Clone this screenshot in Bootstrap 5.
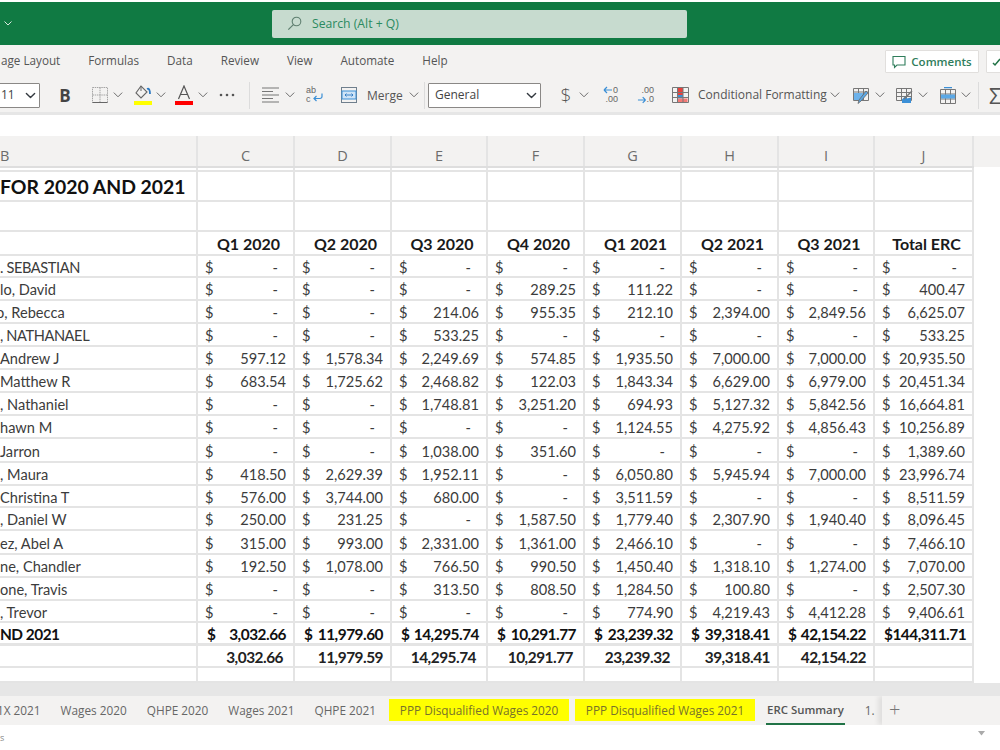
<!DOCTYPE html>
<html lang="en">
<head>
<meta charset="utf-8">
<title>ERC Summary</title>
<link href="https://cdn.jsdelivr.net/npm/bootstrap@5.3.0/dist/css/bootstrap.min.css" rel="stylesheet">
<style>
html,body{height:750px;overflow:hidden;background:#fff;}
body{font-family:"Open Sans","Liberation Sans",sans-serif;color:#444;padding-top:2px;width:1000px;}
.titlebar{height:43px;background:#107a43;color:#fff;position:relative;}
.title-chev{margin-left:4px;}
.searchbox{width:415px;height:28px;margin-left:260px;background:#c7dbcf;border-radius:2px;color:#2a8a60;font-size:12.2px;padding-left:15px;gap:10px;}
.searchbox span{padding-top:1px;}
.ribbon{height:70px;background:#f3f2f1;border-bottom:3px solid #e6e6e6;overflow:hidden;font-size:12px;color:#555;}
.menu{height:32px;}
.menu .nav-link{padding:0;color:#555;font-size:11.7px;margin-right:28px;}
.menu .nav-item:first-child{margin-left:1px;}
.comments{height:23px;width:94px;padding:0;background:#fff;border:1px solid #e1dfdd;border-radius:1px;color:#2f7d5b;font-size:11.5px;font-weight:600;margin-top:5px;flex:none;gap:5px;}
.share{height:23px;width:30px;padding:0 0 0 5px;background:#fff;border:1px solid #e1dfdd;border-radius:1px;margin:5px -16px 0 7px;flex:none;}
.tools{height:36px;margin-left:-10px;}
.tools>*{flex:none;}
.tools .form-select{height:25px;padding:0 0 0 6px;font-size:12px;color:#444;border:1px solid #8a8886;border-radius:1px;background-position:right 3px center;background-size:11px 11px;}
.sel-size{width:50px;padding-left:10px!important;}
.sel-fmt{width:113px;}
.bold-b{width:16px;text-align:center;font-weight:700;font-size:17px;color:#444;line-height:1;}
.vr-line{width:1px;height:27px;background:#dcdcdc;}
.dollar{width:12px;font-size:19px;line-height:1;color:#555;text-align:center;font-weight:300;}
.sigma{font-size:22px;line-height:1;color:#555;}
.t-merge{width:36px;white-space:nowrap;padding-top:2px;}
.t-cf{width:127px;white-space:nowrap;font-size:12px;}
.chev{width:10px;height:6px;margin-right:-2px;}
.stack{font-family:"Liberation Sans",sans-serif;font-size:9px;line-height:9.500px;color:#666;white-space:nowrap;}
.stack>div{display:flex;align-items:center;}
.w-dec{width:16px;}
.w-inc{width:17px;}
.w-wrap{width:17px;}
.w-wrap>div:last-child svg{margin-left:2px;margin-top:-5px;}
.end{justify-content:flex-end;}
.m3{margin-left:3px}.m4{margin-left:4px}.m5{margin-left:5px}.m6{margin-left:6px}.m7{margin-left:7px}.m9{margin-left:9px}.m10{margin-left:10px}.m11{margin-left:11px}.m12{margin-left:12px}.m13{margin-left:13px}.m14{margin-left:14px}.m15{margin-left:15px}.m17{margin-left:17px}.m18{margin-left:18px}.m19{margin-left:19px}
.gap-white{height:21px;}
.sheet-wrap{height:547px;position:relative;overflow:hidden;background:linear-gradient(#f3f2f1 0,#f3f2f1 31px,#fff 31px);}
.sheet{table-layout:fixed;width:973px;font-family:Lato,"Liberation Sans",sans-serif;font-size:14.6px;color:#3c3c3c;border-collapse:collapse;}
.sheet th,.sheet td{padding:4px 7px 0 7px;border:0;border-right:2px solid #e4e4e4;border-bottom:2px solid #e4e4e4;background:transparent;box-shadow:none;text-align:right;vertical-align:middle;white-space:nowrap;overflow:hidden;height:23px;line-height:1;color:#3c3c3c;}
.sheet td i{float:left;font-style:normal;}
.sheet .z{padding-right:15px;}
.sheet td.name{text-align:left;padding-left:0;padding-right:0;}
.sheet td.caps{letter-spacing:-.4px;}
.sheet td.out{text-indent:-4px;}
.sheet thead th{height:31px;font-family:"Open Sans",sans-serif;font-weight:400;font-size:14.5px;color:#6c6c6c;text-align:center;padding:10px 0 0;border-bottom-color:#dedede;}
.sheet thead th:first-child{text-align:left;}
.sheet .r-clip td{height:4px;padding:0;}
.sheet .r-30 td{height:30px;}
.sheet .r-title td{font-size:19.4px;font-weight:700;color:#111;padding-top:2px;}
.sheet .r-head td{height:24px;font-size:16px;font-weight:700;color:#1a1a1a;text-align:center;padding:2px 0 0 6px;}
.sheet .r-22 td{height:22px;}
.sheet .r-24 td{height:24px;}
.sheet .r-total td{height:22px;font-size:15.4px;letter-spacing:-.5px;font-weight:700;color:#111;border-bottom-width:3px;padding-left:9px;}
.sheet .r-total td.name{padding-left:0;}
.sheet .r-check td{font-size:15.4px;letter-spacing:-.5px;font-weight:700;color:#222;}
.sheet .r-check .p10{padding-right:10px;}
.sheet .r-last td{height:15px;}
.scroll-strip{height:13px;background:#e6e6e6;}
.tabbar{height:29px;background:#f3f2f1;font-size:11.8px;color:#666;position:relative;overflow:hidden;}
.tabbar .nav-link{padding:0;color:#666;font-size:11.8px;white-space:nowrap;}
.tabbar .nav-item{margin-right:20px;}
.tabbar .nav-item.first{margin-left:-3px;}
.tabbar .nav-item.ppp{background:#ff0;height:22px;width:180px;margin:0 6px 0 0;text-align:center;}
.tabbar .nav-item.ppp .nav-link{line-height:22px;color:#77722a;}
.tabbar .nav-item.ppp.ppp-first{margin-left:-7px;}
.tabbar .nav-item.act{margin-left:5px;}
.tabbar .nav-link.active{font-weight:600;color:#555;background:none;border-bottom:2px solid #217346;padding:0 1px;height:26px;line-height:22px;font-size:11.4px;}
.tabs-row{height:29px;padding-top:3px;}
.tabs-row .plainlink{line-height:22px;}
.plus-cell{position:absolute;right:0;top:0;width:118px;height:29px;background:#f3f2f1;box-shadow:-4px 0 5px rgba(0,0,0,.08);color:#777;font-size:20px;line-height:27px;padding-left:7px;font-weight:300;}
.tail{height:25px;color:#888;font-size:9px;padding:6px 15px 0 0;}
</style>
</head>
<body>
<div class="titlebar d-flex align-items-center">
  <svg class="title-chev" width="8" height="5" viewBox="0 0 8 5"><path d="M.5.5 4 4 7.500.5" fill="none" stroke="#d9e8df" stroke-width="1"/></svg>
  <div class="searchbox d-flex align-items-center">
    <svg width="15" height="15" viewBox="0 0 15 15"><circle cx="9.500" cy="5.500" r="4.300" fill="none" stroke="#5f7f70" stroke-width="1.100"/><path d="M6.400 8.600 1.300 13.700" stroke="#5f7f70" stroke-width="1.200"/></svg>
    <span>Search (Alt + Q)</span>
  </div>
</div>

<div class="ribbon">
  <div class="menu d-flex">
    <ul class="nav align-items-center">
      <li class="nav-item"><a class="nav-link" href="#">age Layout</a></li>
      <li class="nav-item"><a class="nav-link" href="#">Formulas</a></li>
      <li class="nav-item"><a class="nav-link" href="#">Data</a></li>
      <li class="nav-item"><a class="nav-link" href="#">Review</a></li>
      <li class="nav-item"><a class="nav-link" href="#">View</a></li>
      <li class="nav-item"><a class="nav-link" href="#">Automate</a></li>
      <li class="nav-item"><a class="nav-link" href="#">Help</a></li>
    </ul>
    <button class="btn comments ms-auto d-flex align-items-center justify-content-center">
      <svg width="14" height="14" viewBox="0 0 14 14"><path d="M1 1.500h12v8.500H5L2.500 12.500V10H1z" fill="none" stroke="#2f7d5b" stroke-width="1.100"/></svg>
      <span>Comments</span>
    </button>
    <button class="btn share d-flex align-items-center">
      <svg width="10" height="10" viewBox="0 0 10 10"><path d="M1 6l2 2 5-6" fill="none" stroke="#217346" stroke-width="1.500"/></svg>
    </button>
  </div>
  <div class="tools d-flex align-items-center">
    <select class="form-select sel-size"><option>11</option></select>
    <span class="bold-b m17">B</span>
    <svg class="m19" width="16" height="16" viewBox="0 0 16 16"><path d="M.5.5h15v15H.5zM8 .5v15M.5 8h15" fill="none" stroke="#a5a5a5" stroke-width="1" stroke-dasharray="1.500 .7"/><path d="M.5 15.500h15" stroke="#666" stroke-width="1"/></svg>
    <svg class="chev m5" viewBox="0 0 8 5"><path d="M.5.5 4 4 7.500.5" fill="none" stroke="#666" stroke-width=".8"/></svg>
    <svg class="m13" width="18" height="20" viewBox="0 0 18 20"><path d="M7 1 2 8l5 5 6-6z" fill="none" stroke="#666" stroke-width="1.100"/><path d="M7 1v5" stroke="#666"/><path d="M13 4c2-1 3 1 3 5" fill="none" stroke="#2b79c2" stroke-width="1.800"/><rect y="16" width="18" height="4" fill="#ff0"/></svg>
    <svg class="chev m4" viewBox="0 0 8 5"><path d="M.5.5 4 4 7.500.5" fill="none" stroke="#666" stroke-width=".8"/></svg>
    <svg class="m11" width="18" height="20" viewBox="0 0 18 20"><path d="M3.500 14 9 1l5.500 13M5.500 9.500h7" fill="none" stroke="#555" stroke-width="1.200"/><rect y="16" width="18" height="4" fill="#f00"/></svg>
    <svg class="chev m5" viewBox="0 0 8 5"><path d="M.5.5 4 4 7.500.5" fill="none" stroke="#666" stroke-width=".8"/></svg>
    <svg class="m13" width="16" height="4" viewBox="0 0 16 4"><circle cx="2" cy="2" r="1.300" fill="#555"/><circle cx="8" cy="2" r="1.300" fill="#555"/><circle cx="14" cy="2" r="1.300" fill="#555"/></svg>
    <span class="vr-line m14"></span>
    <svg class="m12" width="17" height="16" viewBox="0 0 17 16"><path d="M0 1h17M0 4.500h11M0 8h17M0 11.500h11M0 15h17" stroke="#777" stroke-width="1.100"/></svg>
    <svg class="chev m6" viewBox="0 0 8 5"><path d="M.5.5 4 4 7.500.5" fill="none" stroke="#666" stroke-width=".8"/></svg>
    <div class="stack w-wrap m13">
      <div>ab</div>
      <div>c<svg width="10" height="9" viewBox="0 0 10 9"><path d="M9 .5v3a2 2 0 0 1-2 2H1M3.500 3 1 5.500 3.500 8" fill="none" stroke="#3b8fd6" stroke-width="1.200"/></svg></div>
    </div>
    <svg class="m18" width="16" height="16" viewBox="0 0 16 16"><rect x=".5" y=".5" width="15" height="15" fill="none" stroke="#6f7f8d"/><rect x="1" y="4" width="14" height="8" fill="#cfe4f6" stroke="#3b8fd6"/><path d="M4 8h8M4 8l1.500-1.500M4 8l1.500 1.500M12 8l-1.500-1.500M12 8l-1.500 1.500" fill="none" stroke="#2b79c2" stroke-width=".9"/></svg>
    <span class="t-merge m10">Merge</span>
    <svg class="chev m6" viewBox="0 0 8 5"><path d="M.5.5 4 4 7.500.5" fill="none" stroke="#666" stroke-width=".8"/></svg>
    <span class="vr-line m7"></span>
    <select class="form-select sel-fmt m3"><option>General</option></select>
    <span class="dollar m19">$</span>
    <svg class="chev m7" viewBox="0 0 8 5"><path d="M.5.5 4 4 7.500.5" fill="none" stroke="#666" stroke-width=".8"/></svg>
    <div class="stack w-dec m15">
      <div class="end"><svg width="10" height="8" viewBox="0 0 10 8"><path d="M9 4H1M1 4l3-3M1 4l3 3" fill="none" stroke="#3b8fd6" stroke-width="1.200"/></svg>0</div>
      <div class="end">.00</div>
    </div>
    <div class="stack w-inc m19">
      <div class="end">.00</div>
      <div class="end"><svg width="10" height="8" viewBox="0 0 10 8"><path d="M1 4h8M9 4 6 1M9 4 6 7" fill="none" stroke="#3b8fd6" stroke-width="1.200"/></svg>.0</div>
    </div>
    <svg class="m18" width="17" height="16" viewBox="0 0 17 16"><rect x="5.500" y="1" width="5.500" height="7" fill="#e8413c"/><rect x="5.500" y="8" width="5.500" height="3.500" fill="#3b8fd6"/><rect x="5.500" y="11.500" width="10" height="4" fill="#f47a76"/><path d="M.5.500h16v15H.5zM5.500.5v15M11 .5v15M.5 5.500h16M.5 10.500h16" fill="none" stroke="#777"/></svg>
    <span class="t-cf m9">Conditional Formatting</span>
    <svg class="chev m5" viewBox="0 0 8 5"><path d="M.5.5 4 4 7.500.5" fill="none" stroke="#666" stroke-width=".8"/></svg>
    <svg class="m15" width="17" height="17" viewBox="0 0 17 17"><path d="M.5 1.500h15v12H.5zM.5 5h15M5.500 1.500v12M10.500 1.500v12" fill="none" stroke="#777"/><path d="M1 6h9v7H1z" fill="#6db2ea"/><path d="M15 6 8 14l-3 2.500 1-3.500 7-9z" fill="#5ba8e6" stroke="#666" stroke-width=".8"/></svg>
    <svg class="chev m5" viewBox="0 0 8 5"><path d="M.5.5 4 4 7.500.5" fill="none" stroke="#666" stroke-width=".8"/></svg>
    <svg class="m13" width="17" height="17" viewBox="0 0 17 17"><path d="M.5 1.500h15v12H.5zM.5 5.500h15M.5 9.500h15M5.500 1.500v12M10.500 1.500v12" fill="none" stroke="#777"/><path d="M6 12.500 9 9.500l2 2 4-1v5.500H6z" fill="#3b8fd6"/><path d="M16 4 8 12" stroke="#777" stroke-width="1.500"/></svg>
    <svg class="chev m5" viewBox="0 0 8 5"><path d="M.5.5 4 4 7.500.5" fill="none" stroke="#666" stroke-width=".8"/></svg>
    <svg class="m14" width="16" height="17" viewBox="0 0 16 17"><path d="M.5 2.500h15v14H.5zM.5 7h15M.5 12h15M5.500 2.500v14M10.500 2.500v14" fill="none" stroke="#777"/><rect x="1" y="7.500" width="14" height="4" fill="#5ba8e6"/><path d="M4 .5h8" stroke="#3b8fd6" stroke-width="1.500"/></svg>
    <svg class="chev m5" viewBox="0 0 8 5"><path d="M.5.5 4 4 7.500.5" fill="none" stroke="#666" stroke-width=".8"/></svg>
    <span class="vr-line m9"></span>
    <span class="sigma m10">Σ</span>
  </div>
</div>

<div class="gap-white"></div>

<div class="sheet-wrap">
<table class="table mb-0 sheet">
<colgroup><col width="197"><col width="97"><col width="97"><col width="96"><col width="97"><col width="97"><col width="97"><col width="96"><col width="99"></colgroup>
<thead><tr><th>B</th><th>C</th><th>D</th><th>E</th><th>F</th><th>G</th><th>H</th><th>I</th><th>J</th></tr></thead>
<tbody>
<tr class="r-clip"><td class="name"></td><td></td><td></td><td></td><td></td><td></td><td></td><td></td><td></td></tr>
<tr class="r-30 r-title"><td class="name">FOR 2020 AND 2021</td><td></td><td></td><td></td><td></td><td></td><td></td><td></td><td></td></tr>
<tr class="r-30"><td class="name"></td><td></td><td></td><td></td><td></td><td></td><td></td><td></td><td></td></tr>
<tr class="r-head"><td></td><td>Q1 2020</td><td>Q2 2020</td><td>Q3 2020</td><td>Q4 2020</td><td>Q1 2021</td><td>Q2 2021</td><td>Q3 2021</td><td>Total ERC</td></tr>
<tr class="r-22"><td class="name caps">. SEBASTIAN</td><td class="z"><i>$</i>-</td><td class="z"><i>$</i>-</td><td class="z"><i>$</i>-</td><td class="z"><i>$</i>-</td><td class="z"><i>$</i>-</td><td class="z"><i>$</i>-</td><td class="z"><i>$</i>-</td><td class="z"><i>$</i>-</td></tr>
<tr><td class="name">lo, David</td><td class="z"><i>$</i>-</td><td class="z"><i>$</i>-</td><td class="z"><i>$</i>-</td><td><i>$</i>289.25</td><td><i>$</i>111.22</td><td class="z"><i>$</i>-</td><td class="z"><i>$</i>-</td><td><i>$</i>400.47</td></tr>
<tr><td class="name out">o, Rebecca</td><td class="z"><i>$</i>-</td><td class="z"><i>$</i>-</td><td><i>$</i>214.06</td><td><i>$</i>955.35</td><td><i>$</i>212.10</td><td><i>$</i>2,394.00</td><td><i>$</i>2,849.56</td><td><i>$</i>6,625.07</td></tr>
<tr><td class="name caps">, NATHANAEL</td><td class="z"><i>$</i>-</td><td class="z"><i>$</i>-</td><td><i>$</i>533.25</td><td class="z"><i>$</i>-</td><td class="z"><i>$</i>-</td><td class="z"><i>$</i>-</td><td class="z"><i>$</i>-</td><td><i>$</i>533.25</td></tr>
<tr><td class="name">Andrew J</td><td><i>$</i>597.12</td><td><i>$</i>1,578.34</td><td><i>$</i>2,249.69</td><td><i>$</i>574.85</td><td><i>$</i>1,935.50</td><td><i>$</i>7,000.00</td><td><i>$</i>7,000.00</td><td><i>$</i>20,935.50</td></tr>
<tr><td class="name">Matthew R</td><td><i>$</i>683.54</td><td><i>$</i>1,725.62</td><td><i>$</i>2,468.82</td><td><i>$</i>122.03</td><td><i>$</i>1,843.34</td><td><i>$</i>6,629.00</td><td><i>$</i>6,979.00</td><td><i>$</i>20,451.34</td></tr>
<tr><td class="name">, Nathaniel</td><td class="z"><i>$</i>-</td><td class="z"><i>$</i>-</td><td><i>$</i>1,748.81</td><td><i>$</i>3,251.20</td><td><i>$</i>694.93</td><td><i>$</i>5,127.32</td><td><i>$</i>5,842.56</td><td><i>$</i>16,664.81</td></tr>
<tr><td class="name">hawn M</td><td class="z"><i>$</i>-</td><td class="z"><i>$</i>-</td><td class="z"><i>$</i>-</td><td class="z"><i>$</i>-</td><td><i>$</i>1,124.55</td><td><i>$</i>4,275.92</td><td><i>$</i>4,856.43</td><td><i>$</i>10,256.89</td></tr>
<tr class="r-24"><td class="name">Jarron</td><td class="z"><i>$</i>-</td><td class="z"><i>$</i>-</td><td><i>$</i>1,038.00</td><td><i>$</i>351.60</td><td class="z"><i>$</i>-</td><td class="z"><i>$</i>-</td><td class="z"><i>$</i>-</td><td><i>$</i>1,389.60</td></tr>
<tr><td class="name">, Maura</td><td><i>$</i>418.50</td><td><i>$</i>2,629.39</td><td><i>$</i>1,952.11</td><td class="z"><i>$</i>-</td><td><i>$</i>6,050.80</td><td><i>$</i>5,945.94</td><td><i>$</i>7,000.00</td><td><i>$</i>23,996.74</td></tr>
<tr class="r-22"><td class="name">Christina T</td><td><i>$</i>576.00</td><td><i>$</i>3,744.00</td><td><i>$</i>680.00</td><td class="z"><i>$</i>-</td><td><i>$</i>3,511.59</td><td class="z"><i>$</i>-</td><td class="z"><i>$</i>-</td><td><i>$</i>8,511.59</td></tr>
<tr><td class="name">, Daniel W</td><td><i>$</i>250.00</td><td><i>$</i>231.25</td><td class="z"><i>$</i>-</td><td><i>$</i>1,587.50</td><td><i>$</i>1,779.40</td><td><i>$</i>2,307.90</td><td><i>$</i>1,940.40</td><td><i>$</i>8,096.45</td></tr>
<tr class="r-24"><td class="name">ez, Abel A</td><td><i>$</i>315.00</td><td><i>$</i>993.00</td><td><i>$</i>2,331.00</td><td><i>$</i>1,361.00</td><td><i>$</i>2,466.10</td><td class="z"><i>$</i>-</td><td class="z"><i>$</i>-</td><td><i>$</i>7,466.10</td></tr>
<tr><td class="name">ne, Chandler</td><td><i>$</i>192.50</td><td><i>$</i>1,078.00</td><td><i>$</i>766.50</td><td><i>$</i>990.50</td><td><i>$</i>1,450.40</td><td><i>$</i>1,318.10</td><td><i>$</i>1,274.00</td><td><i>$</i>7,070.00</td></tr>
<tr><td class="name">one, Travis</td><td class="z"><i>$</i>-</td><td class="z"><i>$</i>-</td><td><i>$</i>313.50</td><td><i>$</i>808.50</td><td><i>$</i>1,284.50</td><td><i>$</i>100.80</td><td class="z"><i>$</i>-</td><td><i>$</i>2,507.30</td></tr>
<tr class="r-22"><td class="name">, Trevor</td><td class="z"><i>$</i>-</td><td class="z"><i>$</i>-</td><td class="z"><i>$</i>-</td><td class="z"><i>$</i>-</td><td><i>$</i>774.90</td><td><i>$</i>4,219.43</td><td><i>$</i>4,412.28</td><td><i>$</i>9,406.61</td></tr>
<tr class="r-total"><td class="name">ND 2021</td><td><i>$</i>3,032.66</td><td><i>$</i>11,979.60</td><td><i>$</i>14,295.74</td><td><i>$</i>10,291.77</td><td><i>$</i>23,239.32</td><td><i>$</i>39,318.41</td><td><i>$</i>42,154.22</td><td><i>$</i>144,311.71</td></tr>
<tr class="r-check"><td class="name"></td><td class="p10">3,032.66</td><td>11,979.59</td><td class="p10">14,295.74</td><td class="p10">10,291.77</td><td class="p10">23,239.32</td><td>39,318.41</td><td>42,154.22</td><td></td></tr>
<tr class="r-last"><td class="name"></td><td></td><td></td><td></td><td></td><td></td><td></td><td></td><td></td></tr>
</tbody>
</table>
</div>

<div class="scroll-strip"></div>
<div class="tabbar">
  <ul class="nav tabs-row">
    <li class="nav-item first"><a class="nav-link plainlink" href="#">1X 2021</a></li>
    <li class="nav-item"><a class="nav-link plainlink" href="#">Wages 2020</a></li>
    <li class="nav-item"><a class="nav-link plainlink" href="#">QHPE 2020</a></li>
    <li class="nav-item"><a class="nav-link plainlink" href="#">Wages 2021</a></li>
    <li class="nav-item"><a class="nav-link plainlink" href="#">QHPE 2021</a></li>
    <li class="nav-item ppp ppp-first"><a class="nav-link" href="#">PPP Disqualified Wages 2020</a></li>
    <li class="nav-item ppp"><a class="nav-link" href="#">PPP Disqualified Wages 2021</a></li>
    <li class="nav-item act"><a class="nav-link active" href="#">ERC Summary</a></li>
    <li class="nav-item"><a class="nav-link plainlink" href="#">1.</a></li>
  </ul>
  <div class="plus-cell">+</div>
</div>
<div class="tail d-flex justify-content-between">
  <span>s</span>
  <svg width="7" height="5" viewBox="0 0 7 5"><path d="M0 0h7L3.500 4.500z" fill="#aaa"/></svg>
</div>
</body>
</html>
